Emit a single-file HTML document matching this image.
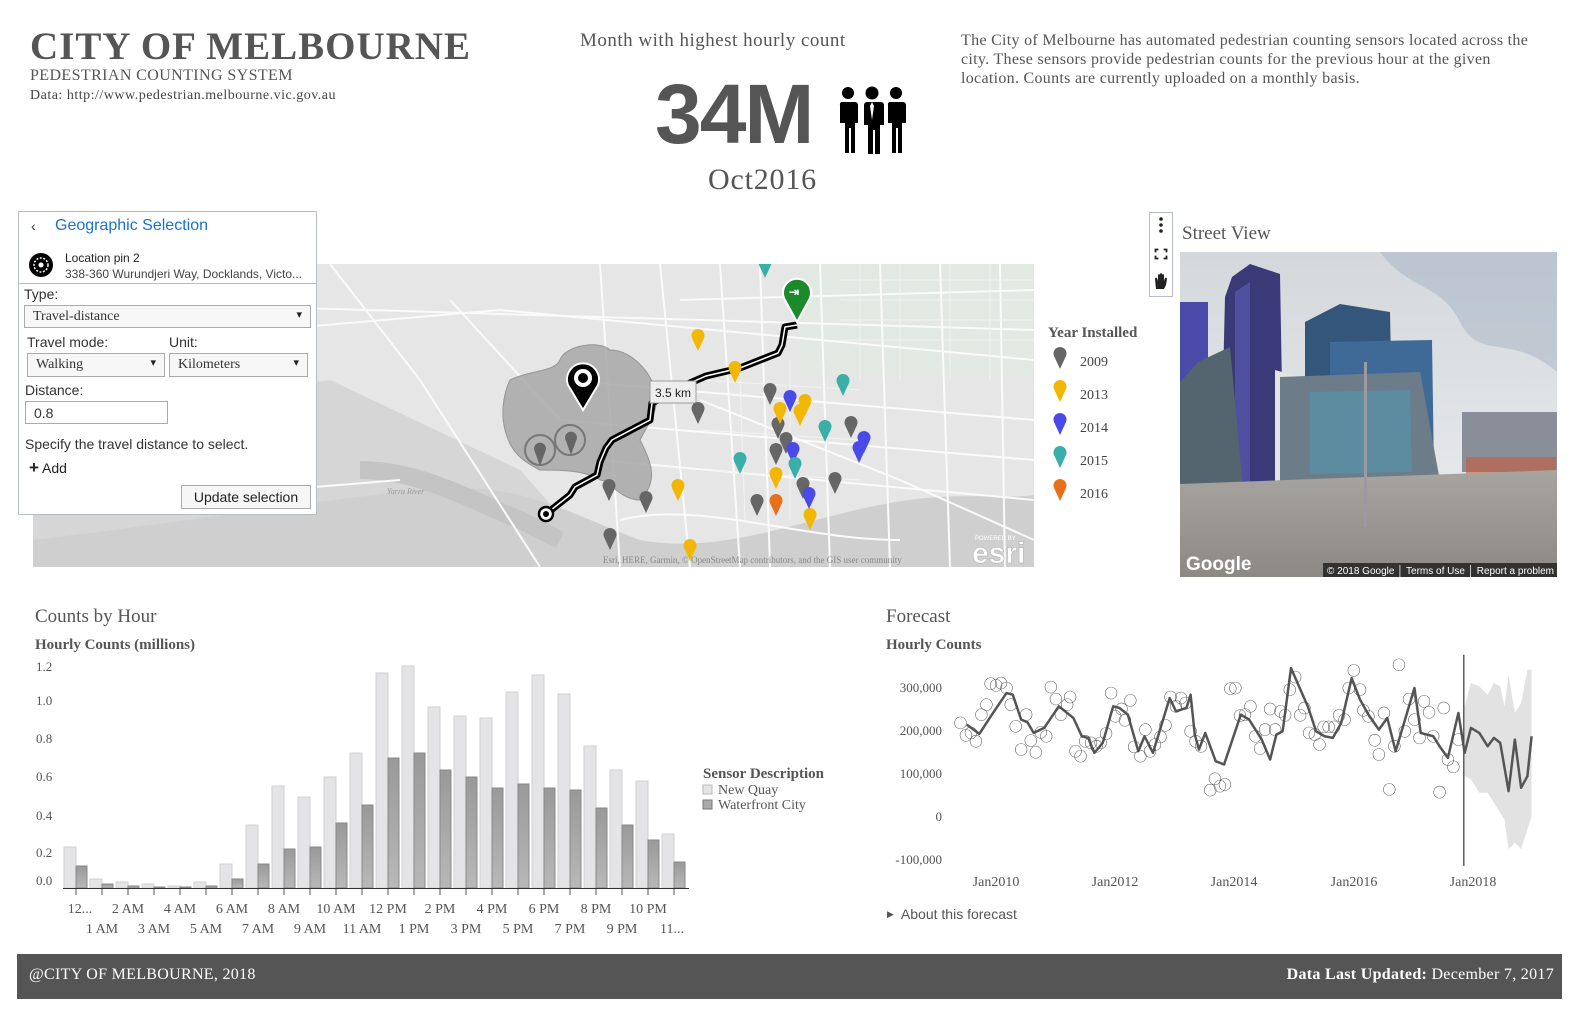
<!DOCTYPE html>
<html><head><meta charset="utf-8">
<style>
*{margin:0;padding:0;box-sizing:border-box}
body{width:1575px;height:1012px;background:#fff;position:relative;overflow:hidden;font-family:"Liberation Serif",serif;color:#555}
.a{position:absolute;white-space:nowrap}
.sans{font-family:"Liberation Sans",sans-serif}
.sel{position:absolute;border:1px solid #aaa;background:#f7f7f7;font-family:"Liberation Serif",serif;font-size:14px;color:#333;padding:3px 8px}
.sel:after{content:"▾";position:absolute;right:8px;top:2px;font-size:11px;color:#222}
</style></head><body>

<div class="a" style="left:30px;top:24px;font-size:39px;font-weight:bold;color:#555;letter-spacing:1px">CITY OF MELBOURNE</div>
<div class="a" style="left:30px;top:67px;font-size:16px;color:#555;letter-spacing:0.4px">PEDESTRIAN COUNTING SYSTEM</div>
<div class="a" style="left:30px;top:88px;font-size:14px;color:#444;letter-spacing:0.5px">Data: http://www.pedestrian.melbourne.vic.gov.au</div>

<div class="a" style="left:580px;top:30px;font-size:19px;color:#555;letter-spacing:0.5px">Month with highest hourly count</div>
<div class="a sans" style="left:655px;top:66px;font-size:84px;font-weight:bold;color:#555;letter-spacing:-2px">34M</div>
<svg class="a" style="left:838px;top:86px" width="70" height="70" viewBox="0 0 70 70">
<g fill="#000">
<circle cx="10" cy="7" r="6"/><path d="M3 16h14a3 3 0 0 1 3 3v18h-3v30h-4V42h-2v25H7V37H2V19a3 3 0 0 1 1-3z"/>
<circle cx="58" cy="7" r="6"/><path d="M51 16h14a3 3 0 0 1 3 3v18h-4v30h-4V42h-2v25h-4V37h-4V19a3 3 0 0 1 1-3z"/>
<circle cx="34" cy="7" r="6.5"/><path d="M25 16h18a3 3 0 0 1 3 3v20h-4v29h-5V44h-2v24h-5V39h-4V19a3 3 0 0 1 3-3z"/>
</g><path d="M34 16l-2 4 2 14 2-14z" fill="#fff"/>
</svg>
<div class="a" style="left:708px;top:163px;font-size:30px;color:#555;letter-spacing:0.8px">Oct2016</div>

<div class="a" style="left:961px;top:31px;font-size:16px;line-height:19px;color:#555;white-space:normal;width:592px;letter-spacing:0.3px">The City of Melbourne has automated pedestrian counting sensors located across the city. These sensors provide pedestrian counts for the previous hour at the given location. Counts are currently uploaded on a monthly basis.</div>

<!-- MAP -->
<svg class="a" style="left:33px;top:264px" width="1001" height="303" viewBox="33 264 1001 303">
<rect x="33" y="264" width="1001" height="303" fill="#e6e6e6"/>
<path d="M33 420 L330 380 L520 470 L600 560 L33 560Z" fill="#d6d6d6"/>
<path d="M33 540 C200 520 320 500 420 490 C520 480 560 510 640 540 C720 555 800 520 880 505 C950 490 1000 500 1034 495 L1034 567 L33 567Z" fill="#cfcfcf"/>
<path d="M360 470 C420 470 470 500 520 520 L560 540" stroke="#c4c4c4" stroke-width="18" fill="none"/>
<rect x="800" y="264" width="234" height="110" fill="#e2e8e2"/>
<g stroke="#fafafa" stroke-width="2" fill="none">
<path d="M33 300 L1034 330"/><path d="M33 350 L500 310 L1034 360"/><path d="M330 264 L420 380 L540 567"/>
<path d="M600 264 L620 567"/><path d="M660 264 L690 567"/><path d="M720 264 L740 567"/><path d="M760 264 L770 567"/>
<path d="M820 264 L830 567"/><path d="M880 264 L890 567"/><path d="M940 264 L950 567"/><path d="M1000 264 L1005 567"/>
<path d="M560 380 L1034 420"/><path d="M560 420 L1034 460"/><path d="M600 460 L1034 500"/><path d="M33 450 L300 420"/>
<path d="M33 510 L400 480"/><path d="M450 300 L560 420"/><path d="M680 300 L1034 290"/><path d="M300 264 L260 420"/>
<path d="M700 400 L900 480 L1034 540"/><path d="M620 520 C700 500 800 540 900 540"/>
</g>
<g stroke="#f2f2f2" stroke-width="1" fill="none">
<path d="M840 280 H1034 M840 300 H1034 M840 320 H1034 M840 340 H1034 M860 264 V380 M900 264 V380 M950 264 V380 M990 264 V380"/>
<path d="M700 380 L860 390 M700 430 L860 440 M700 470 L860 480 M790 360 L790 520 M740 380 L745 520"/>
</g>
<path d="M510 380 C530 370 555 372 560 360 C565 345 600 340 610 350 C630 350 650 370 655 390 C660 410 650 420 640 440 C650 460 660 480 640 500 C620 500 610 480 600 480 C585 470 560 470 540 470 C520 460 510 450 505 430 C500 410 505 390 510 380Z" fill="#a8a8a8" stroke="#888" opacity="0.85"/>
<circle cx="540" cy="450" r="15" fill="none" stroke="#777" stroke-width="2"/>
<circle cx="570" cy="440" r="15" fill="none" stroke="#777" stroke-width="2"/>
<polyline points="546,514 570,495 575,487 597,475 600,462 606,448 612,440 650,420 652,403 690,383 706,376 740,368 778,353 782,345 785,327 797,325" fill="none" stroke="#000" stroke-width="7" stroke-linejoin="round"/>
<polyline points="546,514 570,495 575,487 597,475 600,462 606,448 612,440 650,420 652,403 690,383 706,376 740,368 778,353 782,345 785,327 797,325" fill="none" stroke="#fff" stroke-width="1.5"/>
<circle cx="546" cy="514" r="7" fill="#fff" stroke="#000" stroke-width="2.5"/><circle cx="546" cy="514" r="3" fill="#000"/>
<rect x="650" y="381" width="46" height="22" fill="#eee" stroke="#999"/>
<text x="655" y="397" font-family="Liberation Sans" font-size="12" fill="#222">3.5 km</text>
<g fill="#666">
<path d="M540 466 L535 452 A6 6 0 1 1 545 452Z"/><path d="M571 455 L566 441 A6 6 0 1 1 576 441Z"/>
</g>
<path d="M583 410 L568 385 A16 16 0 1 1 598 385Z" fill="#000" stroke="#fff" stroke-width="2"/>
<circle cx="583" cy="378" r="9" fill="#fff"/><circle cx="583" cy="378" r="5" fill="#000"/>
<path d="M797 322 L785 300 A14 14 0 1 1 809 300Z" fill="#1a8a2a" stroke="#fff" stroke-width="2"/>
<text x="789" y="296" font-family="Liberation Sans" font-size="12" font-weight="bold" fill="#fff">⇥</text>
<g>
<g fill="#666">
<path d="M770 405 L764 392 A6.5 6.5 0 1 1 776 392Z"/><path d="M698 424 L692 411 A6.5 6.5 0 1 1 704 411Z"/><path d="M778 439 L772 426 A6.5 6.5 0 1 1 784 426Z"/><path d="M786 454 L780 441 A6.5 6.5 0 1 1 792 441Z"/><path d="M776 465 L770 452 A6.5 6.5 0 1 1 782 452Z"/><path d="M851 438 L845 425 A6.5 6.5 0 1 1 857 425Z"/><path d="M835 494 L829 481 A6.5 6.5 0 1 1 841 481Z"/><path d="M803 499 L797 486 A6.5 6.5 0 1 1 809 486Z"/><path d="M757 516 L751 503 A6.5 6.5 0 1 1 763 503Z"/><path d="M646 513 L640 500 A6.5 6.5 0 1 1 652 500Z"/><path d="M609 501 L603 488 A6.5 6.5 0 1 1 615 488Z"/><path d="M610 550 L604 537 A6.5 6.5 0 1 1 616 537Z"/>
</g>
<g fill="#f2b705">
<path d="M698 351 L692 338 A6.5 6.5 0 1 1 704 338Z"/><path d="M780 424 L774 411 A6.5 6.5 0 1 1 786 411Z"/><path d="M800 426 L794 413 A6.5 6.5 0 1 1 806 413Z"/><path d="M805 416 L799 403 A6.5 6.5 0 1 1 811 403Z"/><path d="M776 489 L770 476 A6.5 6.5 0 1 1 782 476Z"/><path d="M678 501 L672 488 A6.5 6.5 0 1 1 684 488Z"/><path d="M810 530 L804 517 A6.5 6.5 0 1 1 816 517Z"/><path d="M690 561 L684 548 A6.5 6.5 0 1 1 696 548Z"/><path d="M735 383 L729 370 A6.5 6.5 0 1 1 741 370Z"/>
</g>
<g fill="#4a4ae8">
<path d="M790 412 L784 399 A6.5 6.5 0 1 1 796 399Z"/><path d="M864 453 L858 440 A6.5 6.5 0 1 1 870 440Z"/><path d="M859 463 L853 450 A6.5 6.5 0 1 1 865 450Z"/><path d="M793 464 L787 451 A6.5 6.5 0 1 1 799 451Z"/><path d="M809 509 L803 496 A6.5 6.5 0 1 1 815 496Z"/>
</g>
<g fill="#3aaea8">
<path d="M843 396 L837 383 A6.5 6.5 0 1 1 849 383Z"/><path d="M825 442 L819 429 A6.5 6.5 0 1 1 831 429Z"/><path d="M740 474 L734 461 A6.5 6.5 0 1 1 746 461Z"/><path d="M795 479 L789 466 A6.5 6.5 0 1 1 801 466Z"/><path d="M765 278 L759 265 A6.5 6.5 0 1 1 771 265Z"/>
</g>
<path d="M776 516 L770 503 A6.5 6.5 0 1 1 782 503Z" fill="#e8701a"/>
</g>
<text x="387" y="494" font-family="Liberation Serif" font-size="8" font-style="italic" fill="#999">Yarra River</text>
<text x="603" y="563" font-family="Liberation Serif" font-size="9" fill="#888">Esri, HERE, Garmin, © OpenStreetMap contributors, and the GIS user community</text>
<text x="975" y="540" font-family="Liberation Sans" font-size="6" fill="#fff">POWERED BY</text>
<text x="972" y="563" font-family="Liberation Sans" font-size="30" font-weight="bold" fill="#fff" stroke="#aaa" stroke-width="0.5">esri</text>
</svg>

<!-- panel -->
<div class="a sans" style="left:18px;top:211px;width:299px;height:304px;background:#fff;border:1px solid #b8bcc8">
  <div class="a" style="left:12px;top:6px;font-size:14px;color:#333">‹</div>
  <div class="a" style="left:36px;top:5px;font-size:16px;color:#1a73c8">Geographic Selection</div>
  <svg class="a" style="left:9px;top:40px" width="26" height="26"><circle cx="13" cy="13" r="12" fill="#000"/><circle cx="13" cy="13" r="7" fill="none" stroke="#fff" stroke-width="1.5" stroke-dasharray="2 1.5"/><circle cx="13" cy="13" r="2.5" fill="#fff"/></svg>
  <div class="a" style="left:46px;top:39px;font-size:12px;color:#222">Location pin 2</div>
  <div class="a" style="left:46px;top:55px;font-size:12px;color:#444">338-360 Wurundjeri Way, Docklands, Victo...</div>
  <div class="a" style="left:0;top:71px;width:297px;border-top:1px solid #b8bcc8"></div>
  <div class="a" style="left:5px;top:74px;font-size:14px;color:#333">Type:</div>
  <div class="sel" style="left:5px;top:93px;width:287px;height:23px">Travel-distance</div>
  <div class="a" style="left:8px;top:122px;font-size:14px;color:#333">Travel mode:</div>
  <div class="a" style="left:150px;top:122px;font-size:14px;color:#333">Unit:</div>
  <div class="sel" style="left:8px;top:141px;width:138px;height:24px">Walking</div>
  <div class="sel" style="left:150px;top:141px;width:139px;height:24px">Kilometers</div>
  <div class="a" style="left:6px;top:170px;font-size:14px;color:#333">Distance:</div>
  <div class="a" style="left:6px;top:189px;width:143px;height:23px;border:1px solid #aaa;font-size:14px;color:#333;padding:3px 8px">0.8</div>
  <div class="a" style="left:6px;top:224px;font-size:14px;color:#333">Specify the travel distance to select.</div>
  <div class="a" style="left:10px;top:246px;font-size:14px;color:#222"><b style="font-size:17px">+</b> Add</div>
  <div class="a" style="left:162px;top:273px;width:130px;height:24px;border:1px solid #aaa;background:#f6f6f6;font-size:14px;color:#222;text-align:center;line-height:22px">Update selection</div>
</div>

<!-- legend year -->
<div class="a" style="left:1048px;top:325px;font-size:15px;font-weight:bold;color:#555">Year Installed</div>
<svg class="a" style="left:1050px;top:345px" width="24" height="160">
<path d="M10 24 L4 11 A6.5 6.5 0 1 1 16 11Z" fill="#666"/>
<path d="M10 57 L4 44 A6.5 6.5 0 1 1 16 44Z" fill="#f2b705"/>
<path d="M10 90 L4 77 A6.5 6.5 0 1 1 16 77Z" fill="#4a4ae8"/>
<path d="M10 123 L4 110 A6.5 6.5 0 1 1 16 110Z" fill="#3aaea8"/>
<path d="M10 156 L4 143 A6.5 6.5 0 1 1 16 143Z" fill="#e8701a"/>
</svg>
<div class="a" style="left:1080px;top:346px;font-size:14px;line-height:33px;color:#444">2009<br>2013<br>2014<br>2015<br>2016</div>

<!-- toolbar -->
<div class="a" style="left:1149px;top:212px;width:24px;height:85px;border:1px solid #b8bcc8;background:#fff"></div>
<svg class="a" style="left:1150px;top:213px" width="22" height="82">
<circle cx="11" cy="6" r="1.8" fill="#222"/><circle cx="11" cy="12" r="1.8" fill="#222"/><circle cx="11" cy="18" r="1.8" fill="#222"/>
<path d="M5 36h3v1H6v2H5zM14 36h3v3h-1v-2h-2zM5 43h1v2h2v1H5zM16 43h1v3h-3v-1h2z" fill="#222" stroke="#222" stroke-width="0.8"/>
<path d="M6 76 L5 66 Q5 64 7 65 L8 68 L8 62 Q9 60 10 62 L10 67 L10 61 Q11 59 12 61 L12 67 L12 62 Q13 60 14 62 L14 68 L15 65 Q17 64 17 66 L16 72 L14 76Z" fill="#222"/>
</svg>

<!-- street view -->
<div class="a" style="left:1182px;top:223px;font-size:19px;color:#555">Street View</div>
<svg class="a" style="left:1180px;top:252px" width="377" height="325" viewBox="0 0 377 325">
<defs><linearGradient id="sky" x1="0" y1="0" x2="0" y2="1"><stop offset="0" stop-color="#d4d8dc"/><stop offset="1" stop-color="#eceeef"/></linearGradient>
<linearGradient id="gr" x1="0" y1="0" x2="0" y2="1"><stop offset="0" stop-color="#a8a49f"/><stop offset="1" stop-color="#8c8884"/></linearGradient></defs>
<rect width="377" height="325" fill="url(#sky)"/>
<path d="M200 0 C230 40 260 30 280 70 C300 110 330 80 377 120 V0Z" fill="#9fb0c0" opacity="0.45"/>
<rect x="0" y="50" width="28" height="200" fill="#4a4aa8"/>
<path d="M45 45 L52 25 L70 12 L100 22 L104 250 L60 260 L40 255Z" fill="#3a3a78"/>
<path d="M55 40 L70 30 L70 250 L55 250Z" fill="#5a5ab0" opacity="0.7"/>
<path d="M18 110 L50 95 L65 260 L0 270 L0 130Z" fill="#55656f"/>
<path d="M95 118 L130 128 L130 230 L95 240Z" fill="#e4e4e4"/>
<path d="M125 70 L160 52 L210 60 L212 160 L125 170Z" fill="#34567a"/>
<path d="M150 90 L252 88 L254 220 L150 225Z" fill="#3f6a98"/>
<path d="M100 125 L240 120 L262 240 L100 245Z" fill="#6c7c88"/>
<path d="M130 140 L230 138 L232 220 L130 222Z" fill="#5a90a8" opacity="0.8"/>
<rect x="282" y="160" width="95" height="60" fill="#8a8e98"/>
<rect x="286" y="205" width="90" height="18" fill="#c85a3a" opacity="0.6"/>
<path d="M0 232 L377 218 L377 325 L0 325Z" fill="url(#gr)"/>
<rect x="184" y="110" width="3" height="165" fill="#9a9aa0"/>
<text x="6" y="318" font-family="Liberation Sans" font-size="19" font-weight="bold" fill="#fff">Google</text>
<rect x="143" y="311" width="234" height="14" fill="#222" opacity="0.85"/>
<text x="147" y="322" font-family="Liberation Sans" font-size="10" fill="#fff">© 2018 Google  │ Terms of Use │ Report a problem</text>
</svg>

<!-- Counts by hour -->
<div class="a" style="left:35px;top:606px;font-size:19px;color:#555">Counts by Hour</div>
<div class="a" style="left:35px;top:637px;font-size:15px;font-weight:bold;color:#555">Hourly Counts (millions)</div>
<svg class="a" style="left:0;top:650px" width="860" height="300" viewBox="0 650 860 300">
<defs><linearGradient id="dk" x1="0" y1="0" x2="0" y2="1"><stop offset="0" stop-color="#999"/><stop offset="1" stop-color="#b8b8b8"/></linearGradient></defs>
<g font-family="Liberation Serif" font-size="13" fill="#555">
<text x="36" y="671">1.2</text><text x="36" y="705">1.0</text><text x="36" y="743">0.8</text><text x="36" y="781">0.6</text><text x="36" y="820">0.4</text><text x="36" y="857">0.2</text><text x="36" y="885">0.0</text>
</g>
<g fill="#e4e4e6" stroke="#d0d0d2" stroke-width="1">
<rect x="64" y="847" width="12" height="41"/><rect x="90" y="879" width="12" height="9"/><rect x="116" y="882" width="12" height="6"/><rect x="142" y="884" width="12" height="4"/><rect x="168" y="886" width="12" height="2"/><rect x="194" y="882" width="12" height="6"/><rect x="220" y="864" width="12" height="24"/><rect x="246" y="825" width="12" height="63"/><rect x="272" y="786" width="12" height="102"/><rect x="298" y="797" width="12" height="91"/><rect x="324" y="777" width="12" height="111"/><rect x="350" y="753" width="12" height="135"/><rect x="376" y="673" width="12" height="215"/><rect x="402" y="666" width="12" height="222"/><rect x="428" y="707" width="12" height="181"/><rect x="454" y="716" width="12" height="172"/><rect x="480" y="718" width="12" height="170"/><rect x="506" y="692" width="12" height="196"/><rect x="532" y="675" width="12" height="213"/><rect x="558" y="694" width="12" height="194"/><rect x="584" y="746" width="12" height="142"/><rect x="610" y="770" width="12" height="118"/><rect x="636" y="781" width="12" height="107"/><rect x="662" y="834" width="12" height="54"/>
</g>
<g fill="url(#dk)" stroke="#888" stroke-width="1">
<rect x="76" y="866" width="11" height="22"/><rect x="102" y="884" width="11" height="4"/><rect x="128" y="886" width="11" height="2"/><rect x="154" y="887" width="11" height="1"/><rect x="180" y="887" width="11" height="1"/><rect x="206" y="886" width="11" height="2"/><rect x="232" y="879" width="11" height="9"/><rect x="258" y="864" width="11" height="24"/><rect x="284" y="849" width="11" height="39"/><rect x="310" y="847" width="11" height="41"/><rect x="336" y="823" width="11" height="65"/><rect x="362" y="805" width="11" height="83"/><rect x="388" y="758" width="11" height="130"/><rect x="414" y="753" width="11" height="135"/><rect x="440" y="770" width="11" height="118"/><rect x="466" y="777" width="11" height="111"/><rect x="492" y="788" width="11" height="100"/><rect x="518" y="784" width="11" height="104"/><rect x="544" y="788" width="11" height="100"/><rect x="570" y="790" width="11" height="98"/><rect x="596" y="808" width="11" height="80"/><rect x="622" y="825" width="11" height="63"/><rect x="648" y="840" width="11" height="48"/><rect x="674" y="862" width="11" height="26"/>
</g>
<line x1="63" y1="888.5" x2="689" y2="888.5" stroke="#333"/>
<g stroke="#555"><path d="M76 889v6M102 889v6M128 889v6M154 889v6M180 889v6M206 889v6M232 889v6M258 889v6M284 889v6M310 889v6M336 889v6M362 889v6M388 889v6M414 889v6M440 889v6M466 889v6M492 889v6M518 889v6M544 889v6M570 889v6M596 889v6M622 889v6M648 889v6M674 889v6"/></g>
<g font-family="Liberation Serif" font-size="14" fill="#555" text-anchor="middle">
<text x="80" y="913">12...</text><text x="128" y="913">2 AM</text><text x="180" y="913">4 AM</text><text x="232" y="913">6 AM</text><text x="284" y="913">8 AM</text><text x="336" y="913">10 AM</text><text x="388" y="913">12 PM</text><text x="440" y="913">2 PM</text><text x="492" y="913">4 PM</text><text x="544" y="913">6 PM</text><text x="596" y="913">8 PM</text><text x="648" y="913">10 PM</text>
<text x="102" y="933">1 AM</text><text x="154" y="933">3 AM</text><text x="206" y="933">5 AM</text><text x="258" y="933">7 AM</text><text x="310" y="933">9 AM</text><text x="362" y="933">11 AM</text><text x="414" y="933">1 PM</text><text x="466" y="933">3 PM</text><text x="518" y="933">5 PM</text><text x="570" y="933">7 PM</text><text x="622" y="933">9 PM</text><text x="672" y="933">11...</text>
</g>
<text x="703" y="778" font-family="Liberation Serif" font-size="15" font-weight="bold" fill="#555">Sensor Description</text>
<rect x="703" y="785" width="9" height="9" fill="#e4e4e6" stroke="#bbb"/><text x="718" y="794" font-family="Liberation Serif" font-size="14" fill="#555">New Quay</text>
<rect x="703" y="800" width="9" height="9" fill="#aaa" stroke="#777"/><text x="718" y="809" font-family="Liberation Serif" font-size="14" fill="#555">Waterfront City</text>
</svg>

<!-- Forecast -->
<div class="a" style="left:886px;top:606px;font-size:19px;color:#555">Forecast</div>
<div class="a" style="left:886px;top:637px;font-size:15px;font-weight:bold;color:#555">Hourly Counts</div>
<svg class="a" style="left:870px;top:650px" width="700" height="245" viewBox="870 650 700 245">
<g font-family="Liberation Serif" font-size="13" fill="#555" text-anchor="end">
<text x="942" y="692">300,000</text><text x="942" y="735">200,000</text><text x="942" y="778">100,000</text><text x="942" y="821">0</text><text x="942" y="864">-100,000</text>
</g>
<g font-family="Liberation Serif" font-size="14" fill="#555" text-anchor="middle">
<text x="996" y="886">Jan2010</text><text x="1115" y="886">Jan2012</text><text x="1234" y="886">Jan2014</text><text x="1354" y="886">Jan2016</text><text x="1473" y="886">Jan2018</text>
</g>
<g transform="translate(876.8,636.5) scale(0.4184,0.3325)">
<polygon points="1405,210 1420,140 1440,150 1460,175 1475,140 1490,150 1500,210 1510,115 1525,230 1540,200 1555,100 1565,100 1565,540 1550,600 1540,640 1525,620 1510,640 1500,550 1480,510 1460,470 1440,470 1420,430 1405,420" fill="#e2e2e2"/>
<line x1="1403" y1="55" x2="1403" y2="690" stroke="#333" stroke-width="1.2" vector-effect="non-scaling-stroke"/>
<polyline fill="none" stroke="#555" stroke-width="2.5" vector-effect="non-scaling-stroke" stroke-linejoin="round" points="215,265 245,293 275,235 310,170 325,175 345,250 360,258 375,290 400,275 435,210 470,245 490,300 505,305 520,350 540,320 565,210 580,215 600,235 625,345 640,300 660,350 700,185 715,225 740,215 750,175 760,295 770,340 785,290 810,375 830,385 850,310 870,235 890,250 920,310 940,370 955,295 970,285 990,95 1030,210 1050,285 1070,300 1090,305 1110,260 1135,125 1155,190 1175,235 1200,280 1220,245 1240,345 1285,155 1300,290 1330,300 1345,330 1365,365 1390,230 1405,350 1420,275 1440,290 1460,330 1475,305 1490,320 1510,465 1525,310 1540,455 1555,420 1565,300"/>
<g fill="none" stroke="#444" stroke-width="1.2" vector-effect="non-scaling-stroke">
<ellipse cx="200" cy="260" rx="14" ry="18"/><ellipse cx="213" cy="297" rx="14" ry="18"/><ellipse cx="225" cy="290" rx="14" ry="18"/><ellipse cx="237" cy="315" rx="14" ry="18"/><ellipse cx="250" cy="235" rx="14" ry="18"/><ellipse cx="262" cy="205" rx="14" ry="18"/><ellipse cx="272" cy="142" rx="14" ry="18"/><ellipse cx="285" cy="147" rx="14" ry="18"/><ellipse cx="297" cy="140" rx="14" ry="18"/><ellipse cx="310" cy="155" rx="14" ry="18"/><ellipse cx="320" cy="205" rx="14" ry="18"/><ellipse cx="332" cy="270" rx="14" ry="18"/><ellipse cx="345" cy="340" rx="14" ry="18"/><ellipse cx="357" cy="235" rx="14" ry="18"/><ellipse cx="368" cy="313" rx="14" ry="18"/><ellipse cx="380" cy="348" rx="14" ry="18"/><ellipse cx="392" cy="288" rx="14" ry="18"/><ellipse cx="405" cy="300" rx="14" ry="18"/><ellipse cx="416" cy="152" rx="14" ry="18"/><ellipse cx="428" cy="188" rx="14" ry="18"/><ellipse cx="440" cy="235" rx="14" ry="18"/><ellipse cx="455" cy="205" rx="14" ry="18"/><ellipse cx="462" cy="182" rx="14" ry="18"/><ellipse cx="475" cy="345" rx="14" ry="18"/><ellipse cx="487" cy="360" rx="14" ry="18"/><ellipse cx="498" cy="315" rx="14" ry="18"/><ellipse cx="512" cy="320" rx="14" ry="18"/><ellipse cx="525" cy="330" rx="14" ry="18"/><ellipse cx="535" cy="320" rx="14" ry="18"/><ellipse cx="548" cy="292" rx="14" ry="18"/><ellipse cx="560" cy="170" rx="14" ry="18"/><ellipse cx="570" cy="240" rx="14" ry="18"/><ellipse cx="585" cy="218" rx="14" ry="18"/><ellipse cx="593" cy="252" rx="14" ry="18"/><ellipse cx="606" cy="192" rx="14" ry="18"/><ellipse cx="615" cy="332" rx="14" ry="18"/><ellipse cx="630" cy="360" rx="14" ry="18"/><ellipse cx="642" cy="280" rx="14" ry="18"/><ellipse cx="653" cy="345" rx="14" ry="18"/><ellipse cx="665" cy="325" rx="14" ry="18"/><ellipse cx="678" cy="302" rx="14" ry="18"/><ellipse cx="690" cy="267" rx="14" ry="18"/><ellipse cx="702" cy="182" rx="14" ry="18"/><ellipse cx="715" cy="210" rx="14" ry="18"/><ellipse cx="727" cy="185" rx="14" ry="18"/><ellipse cx="738" cy="200" rx="14" ry="18"/><ellipse cx="750" cy="285" rx="14" ry="18"/><ellipse cx="762" cy="315" rx="14" ry="18"/><ellipse cx="775" cy="330" rx="14" ry="18"/><ellipse cx="797" cy="462" rx="14" ry="18"/><ellipse cx="808" cy="428" rx="14" ry="18"/><ellipse cx="820" cy="450" rx="14" ry="18"/><ellipse cx="832" cy="445" rx="14" ry="18"/><ellipse cx="845" cy="157" rx="14" ry="18"/><ellipse cx="857" cy="155" rx="14" ry="18"/><ellipse cx="868" cy="238" rx="14" ry="18"/><ellipse cx="880" cy="235" rx="14" ry="18"/><ellipse cx="893" cy="210" rx="14" ry="18"/><ellipse cx="905" cy="300" rx="14" ry="18"/><ellipse cx="916" cy="337" rx="14" ry="18"/><ellipse cx="928" cy="280" rx="14" ry="18"/><ellipse cx="940" cy="218" rx="14" ry="18"/><ellipse cx="952" cy="280" rx="14" ry="18"/><ellipse cx="965" cy="225" rx="14" ry="18"/><ellipse cx="976" cy="237" rx="14" ry="18"/><ellipse cx="987" cy="160" rx="14" ry="18"/><ellipse cx="1000" cy="122" rx="14" ry="18"/><ellipse cx="1012" cy="237" rx="14" ry="18"/><ellipse cx="1022" cy="215" rx="14" ry="18"/><ellipse cx="1033" cy="290" rx="14" ry="18"/><ellipse cx="1047" cy="295" rx="14" ry="18"/><ellipse cx="1058" cy="325" rx="14" ry="18"/><ellipse cx="1068" cy="272" rx="14" ry="18"/><ellipse cx="1080" cy="272" rx="14" ry="18"/><ellipse cx="1093" cy="272" rx="14" ry="18"/><ellipse cx="1105" cy="237" rx="14" ry="18"/><ellipse cx="1118" cy="250" rx="14" ry="18"/><ellipse cx="1128" cy="155" rx="14" ry="18"/><ellipse cx="1140" cy="102" rx="14" ry="18"/><ellipse cx="1155" cy="160" rx="14" ry="18"/><ellipse cx="1163" cy="222" rx="14" ry="18"/><ellipse cx="1175" cy="240" rx="14" ry="18"/><ellipse cx="1190" cy="312" rx="14" ry="18"/><ellipse cx="1200" cy="355" rx="14" ry="18"/><ellipse cx="1212" cy="230" rx="14" ry="18"/><ellipse cx="1225" cy="460" rx="14" ry="18"/><ellipse cx="1237" cy="330" rx="14" ry="18"/><ellipse cx="1248" cy="85" rx="14" ry="18"/><ellipse cx="1262" cy="285" rx="14" ry="18"/><ellipse cx="1272" cy="188" rx="14" ry="18"/><ellipse cx="1285" cy="250" rx="14" ry="18"/><ellipse cx="1297" cy="305" rx="14" ry="18"/><ellipse cx="1308" cy="195" rx="14" ry="18"/><ellipse cx="1320" cy="228" rx="14" ry="18"/><ellipse cx="1330" cy="300" rx="14" ry="18"/><ellipse cx="1345" cy="468" rx="14" ry="18"/><ellipse cx="1355" cy="215" rx="14" ry="18"/><ellipse cx="1365" cy="370" rx="14" ry="18"/><ellipse cx="1378" cy="392" rx="14" ry="18"/><ellipse cx="1390" cy="310" rx="14" ry="18"/>
</g>
</g>
</svg>
<div class="a sans" style="left:887px;top:906px;font-size:14px;color:#555"><span style="font-size:9px;vertical-align:2px">▶</span>&nbsp; About this forecast</div>

<!-- footer -->
<div class="a" style="left:17px;top:954px;width:1545px;height:45px;background:#555"></div>
<div class="a" style="left:29px;top:966px;font-size:16px;color:#fff;letter-spacing:0.3px">@CITY OF MELBOURNE, 2018</div>
<div class="a" style="right:21px;top:966px;font-size:16px;color:#fff;letter-spacing:0.3px"><b>Data Last Updated:</b> December 7, 2017</div>
</body></html>
